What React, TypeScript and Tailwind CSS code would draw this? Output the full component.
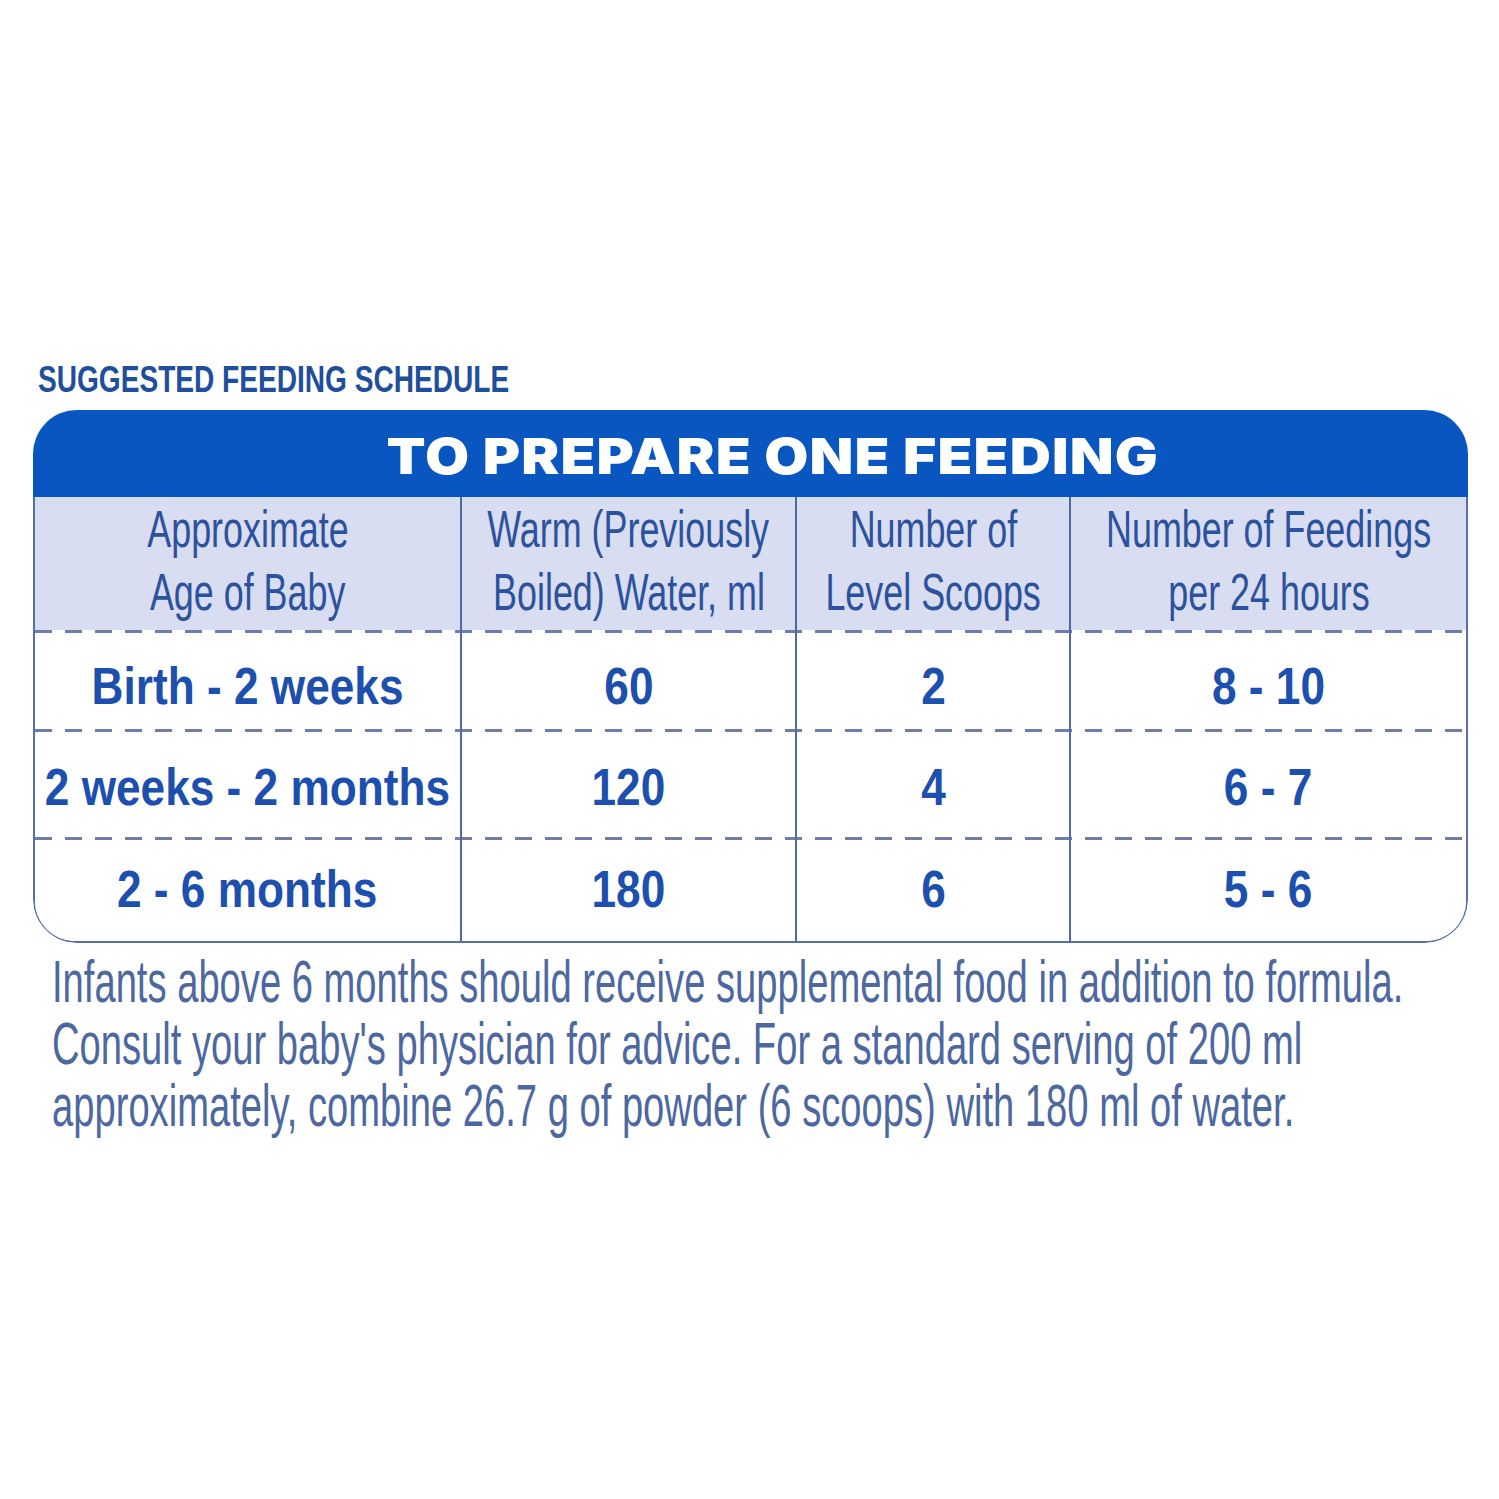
const sans = "font-['Liberation_Sans',Arial,sans-serif]";
const dash =
    "bg-[repeating-linear-gradient(90deg,#6f7ea8_0px,#6f7ea8_17px,transparent_17px,transparent_30px)] bg-no-repeat bg-[length:100%_3px] bg-top";

const headers: [string, string][] = [
    ["Approximate", "Age of Baby"],
    ["Warm (Previously", "Boiled) Water, ml"],
    ["Number of", "Level Scoops"],
    ["Number of Feedings", "per 24 hours"],
];

const rows = [
    { cells: ["Birth - 2 weeks", "60", "2", "8 - 10"], h: "h-[99px]", pad: "pt-[13px]" },
    { cells: ["2 weeks - 2 months", "120", "4", "6 - 7"], h: "h-[108px]", pad: "pt-[8px]" },
    { cells: ["2 - 6 months", "180", "6", "5 - 6"], h: "h-[104px]", pad: "pt-0" },
];

const note = [
    "Infants above 6 months should receive supplemental food in addition to formula.",
    "Consult your baby's physician for advice. For a standard serving of 200 ml",
    "approximately, combine 26.7 g of powder (6 scoops) with 180 ml of water.",
];

export default function App() {
    return (
        <div className={`min-h-[1499px] w-full overflow-hidden bg-white pt-[362px] pl-[33px] ${sans}`}>
            {/* Title */}
            <div className="ml-[5px] h-[36px] text-[36px] leading-[36px] font-bold text-[#1f4f9c]">
                <span className="inline-block origin-left scale-x-[0.78] whitespace-nowrap">
                    SUGGESTED FEEDING SCHEDULE
                </span>
            </div>

            {/* Table */}
            <div className="mt-[12px] w-[1435px] overflow-hidden rounded-[44px]">
                <div className="flex h-[87px] items-center justify-center bg-[#0a56c1] pl-[44px] pt-[4px]">
                    <span className="inline-block scale-x-[1.14] font-['Inter',sans-serif] text-[50px] leading-none font-black tracking-[0.02em] whitespace-nowrap text-white">
                        TO PREPARE ONE FEEDING
                    </span>
                </div>

                <div className="overflow-hidden rounded-b-[42px] border-x-2 border-b-2 border-[#5670aa]">
                    {/* Column headings */}
                    <div className="grid h-[133px] grid-cols-[425px_335px_274px_minmax(0,1fr)] bg-[#d8ddf1] text-[52px] leading-[63px] text-[#2c529e]">
                        {headers.map((h, i) => (
                            <div
                                key={i}
                                className={`flex min-w-0 flex-col items-center justify-center pb-[6px] ${i > 0 ? "border-l-2 border-[#4f69a8]" : ""}`}
                            >
                                {h.map((line) => (
                                    <span key={line} className="inline-block scale-x-[0.69] whitespace-nowrap">
                                        {line}
                                    </span>
                                ))}
                            </div>
                        ))}
                    </div>

                    {/* Rows */}
                    {rows.map((r, ri) => (
                        <div
                            key={ri}
                            className={`grid grid-cols-[425px_335px_274px_minmax(0,1fr)] bg-white ${dash} ${r.h} text-[52px] leading-[52px] font-bold text-[#1c4fae]`}
                        >
                            {r.cells.map((c, ci) => (
                                <div
                                    key={ci}
                                    className={`flex min-w-0 items-center justify-center ${r.pad} ${ci > 0 ? "border-l-2 border-[#4f69a8]" : ""}`}
                                >
                                    <span className="inline-block scale-x-[0.85] whitespace-nowrap">{c}</span>
                                </div>
                            ))}
                        </div>
                    ))}
                </div>
            </div>

            {/* Note */}
            <div className="mt-[8px] ml-[19px] text-[60px] leading-[62px] text-[#4d68a0]">
                {note.map((line) => (
                    <div key={line} className="h-[62px]">
                        <span className="inline-block origin-left scale-x-[0.636] whitespace-nowrap">{line}</span>
                    </div>
                ))}
            </div>
        </div>
    );
}
